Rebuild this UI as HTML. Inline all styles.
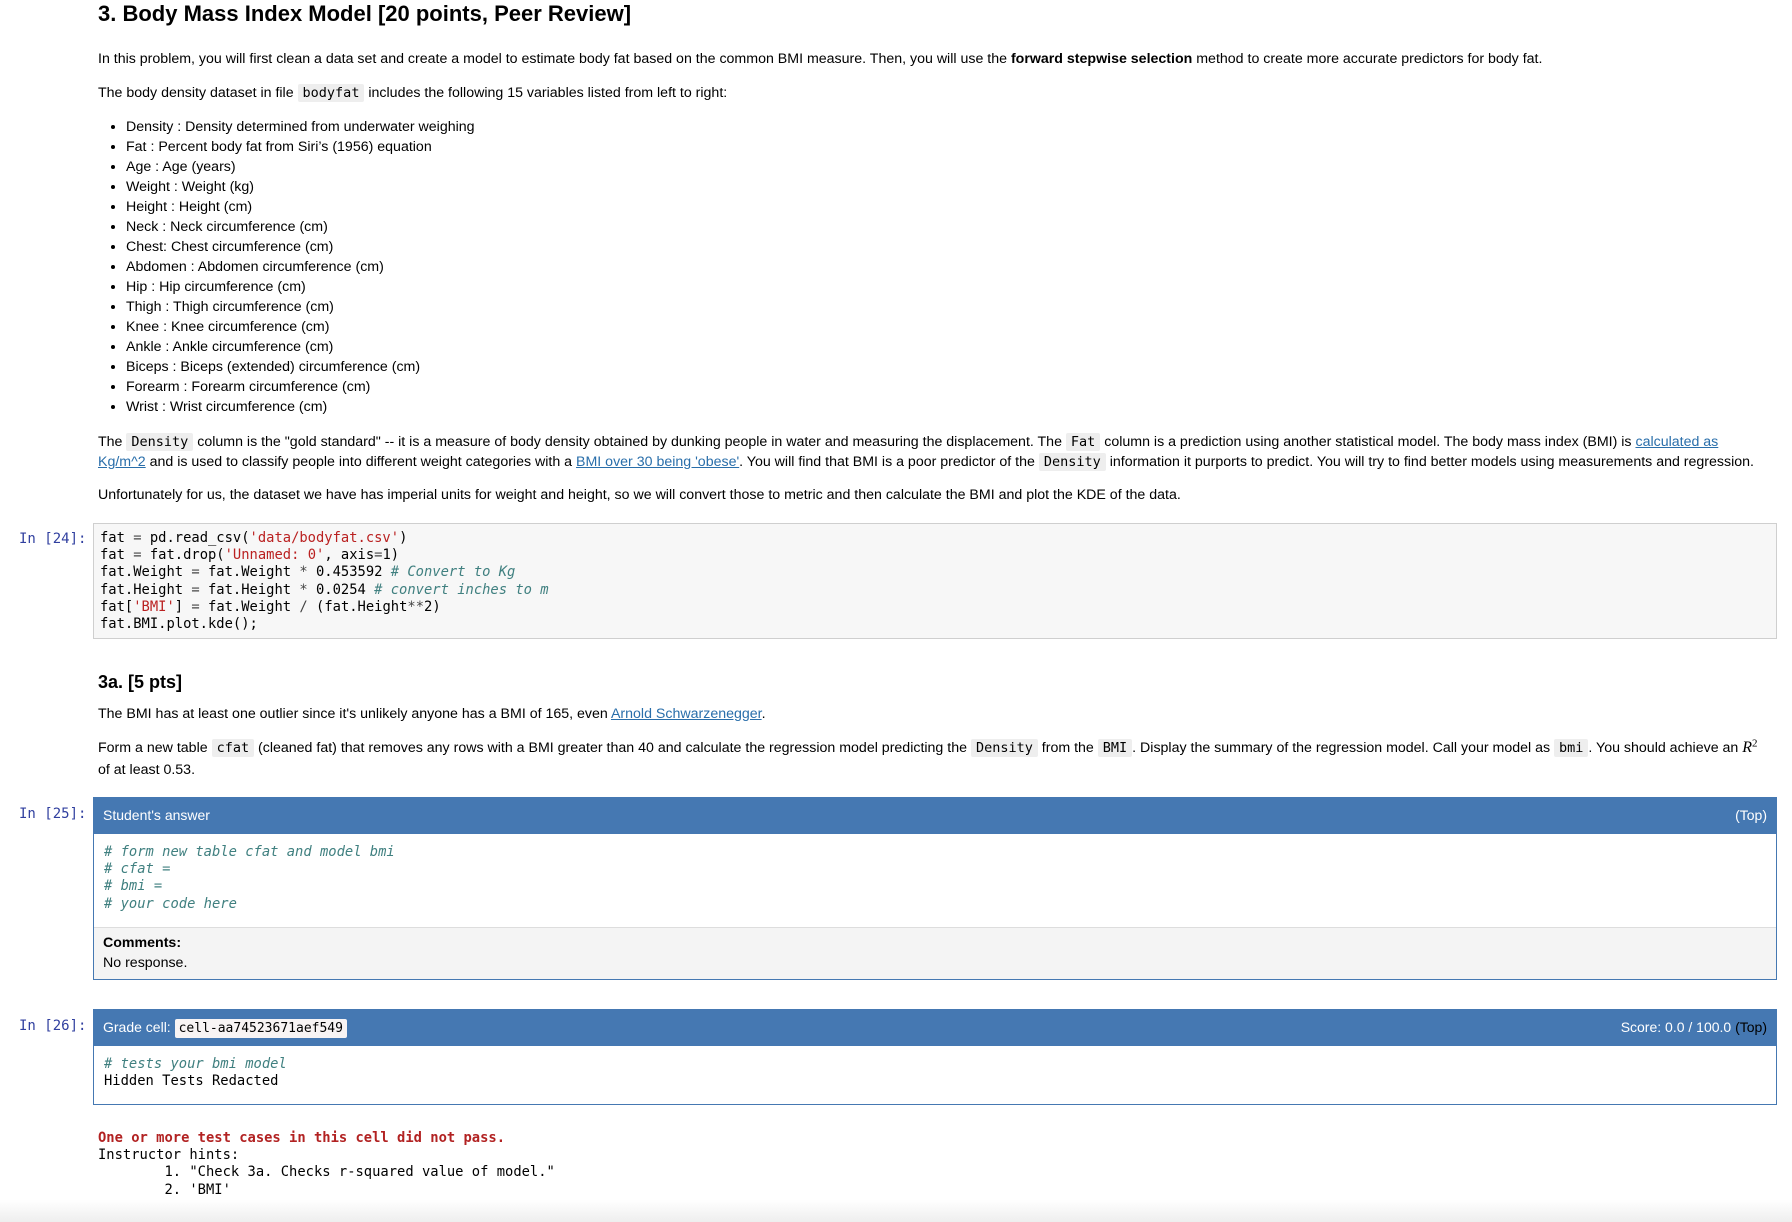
<!DOCTYPE html>
<html><head><meta charset="utf-8"><style>
*{margin:0;padding:0;box-sizing:border-box}
body{width:1792px;height:1222px;background:#fff;font-family:"Liberation Sans",sans-serif;font-size:14.2px;color:#000;position:relative;overflow:hidden}
.a{position:absolute;left:98px;white-space:nowrap;line-height:20px}
code,.m{font-family:"DejaVu Sans Mono","Liberation Mono",monospace}
code{background:#eee;padding:1px 5px;font-size:13.5px;border-radius:2px}
a{color:#296eaa;text-decoration:underline}
.pr{position:absolute;left:19px;font-family:"DejaVu Sans Mono",monospace;font-size:14px;color:#303f9f;line-height:17px}
.box{position:absolute;left:93px;width:1684px}
.pre{font-family:"DejaVu Sans Mono",monospace;font-size:13.8px;line-height:17.2px;white-space:pre}
.s{color:#ba2121}.c{color:#408080;font-style:italic}.o{color:#444}
.hd{background:#4578b2;color:#fff;height:37px;line-height:37px;padding:0 9px;font-size:14px;position:relative}
.hd .r{position:absolute;right:9px;top:0}
ul{list-style:disc}
</style></head><body>
<div class="a" style="top:0;font-size:22px;font-weight:bold;line-height:28px">3. Body Mass Index Model [20 points, Peer Review]</div>
<div class="a" style="top:49px">In this problem, you will first clean a data set and create a model to estimate body fat based on the common BMI measure. Then, you will use the <b>forward stepwise selection</b> method to create more accurate predictors for body fat.</div>
<div class="a" style="top:83px">The body density dataset in file <code>bodyfat</code> includes the following 15 variables listed from left to right:</div>
<ul class="a" style="top:117px;left:126px">
<li>Density : Density determined from underwater weighing</li>
<li>Fat : Percent body fat from Siri’s (1956) equation</li>
<li>Age : Age (years)</li>
<li>Weight : Weight (kg)</li>
<li>Height : Height (cm)</li>
<li>Neck : Neck circumference (cm)</li>
<li>Chest: Chest circumference (cm)</li>
<li>Abdomen : Abdomen circumference (cm)</li>
<li>Hip : Hip circumference (cm)</li>
<li>Thigh : Thigh circumference (cm)</li>
<li>Knee : Knee circumference (cm)</li>
<li>Ankle : Ankle circumference (cm)</li>
<li>Biceps : Biceps (extended) circumference (cm)</li>
<li>Forearm : Forearm circumference (cm)</li>
<li>Wrist : Wrist circumference (cm)</li>
</ul>
<div class="a" style="top:432px">The <code>Density</code> column is the "gold standard" -- it is a measure of body density obtained by dunking people in water and measuring the displacement. The <code>Fat</code> column is a prediction using another statistical model. The body mass index (BMI) is <a>calculated as</a></div>
<div class="a" style="top:452px"><a>Kg/m^2</a> and is used to classify people into different weight categories with a <a>BMI over 30 being 'obese'</a>. You will find that BMI is a poor predictor of the <code>Density</code> information it purports to predict. You will try to find better models using measurements and regression.</div>
<div class="a" style="top:485px">Unfortunately for us, the dataset we have has imperial units for weight and height, so we will convert those to metric and then calculate the BMI and plot the KDE of the data.</div>
<div class="pr" style="top:531px">In [24]:</div>
<div class="box" style="top:523px;height:116px;background:#f7f7f7;border:1px solid #cfcfcf;padding:6px 6px">
<div class="pre">fat <span class="o">=</span> pd.read_csv(<span class="s">'data/bodyfat.csv'</span>)
fat <span class="o">=</span> fat.drop(<span class="s">'Unnamed: 0'</span>, axis<span class="o">=</span>1)
fat.Weight <span class="o">=</span> fat.Weight <span class="o">*</span> 0.453592 <span class="c"># Convert to Kg</span>
fat.Height <span class="o">=</span> fat.Height <span class="o">*</span> 0.0254 <span class="c"># convert inches to m</span>
fat[<span class="s">'BMI'</span>] <span class="o">=</span> fat.Weight <span class="o">/</span> (fat.Height<span class="o">**</span>2)
fat.BMI.plot.kde();</div></div>
<div class="a" style="top:670px;font-size:18px;font-weight:bold;line-height:24px">3a. [5 pts]</div>
<div class="a" style="top:704px">The BMI has at least one outlier since it's unlikely anyone has a BMI of 165, even <a>Arnold Schwarzenegger</a>.</div>
<div class="a" style="top:738px">Form a new table <code>cfat</code> (cleaned fat) that removes any rows with a BMI greater than 40 and calculate the regression model predicting the <code>Density</code> from the <code>BMI</code>. Display the summary of the regression model. Call your model as <code>bmi</code>. You should achieve an <i style="font-family:'Liberation Serif',serif;font-size:16px">R</i><sup style="font-family:'Liberation Serif',serif;font-size:11px;line-height:0">2</sup></div>
<div class="a" style="top:760px">of at least 0.53.</div>
<div class="pr" style="top:806px">In [25]:</div>
<div class="box" style="top:797px;height:183px;border:1px solid #4578b2;border-top:none">
<div class="hd">Student's answer<span class="r">(Top)</span></div>
<div class="pre c" style="padding:10px 10px;height:93px"># form new table cfat and model bmi
# cfat =
# bmi =
# your code here</div>
<div style="background:#f4f4f4;border-top:1px solid #ddd;height:52px;padding:5px 9px;line-height:20px"><b>Comments:</b><br>No response.</div>
</div>
<div class="pr" style="top:1018px">In [26]:</div>
<div class="box" style="top:1009px;height:96px;border:1px solid #4578b2;border-top:none">
<div class="hd">Grade cell: <span class="m" style="background:#f8f4f4;color:#000;padding:2px 4px;font-size:13px;border-radius:2px">cell-aa74523671aef549</span><span class="r">Score: 0.0 / 100.0 <span style="color:#000">(Top)</span></span></div>
<div class="pre" style="padding:10px 10px"><span class="c"># tests your bmi model</span>
Hidden Tests Redacted</div>
</div>
<div class="pre" style="position:absolute;left:98px;top:1130px"><span style="color:#b22222;font-weight:bold">One or more test cases in this cell did not pass.</span>
Instructor hints:
        1. "Check 3a. Checks r-squared value of model."
        2. 'BMI'</div>
<div style="position:absolute;left:0;top:1200px;width:1792px;height:22px;background:linear-gradient(rgba(255,255,255,0),#eee)"></div>
</body></html>
